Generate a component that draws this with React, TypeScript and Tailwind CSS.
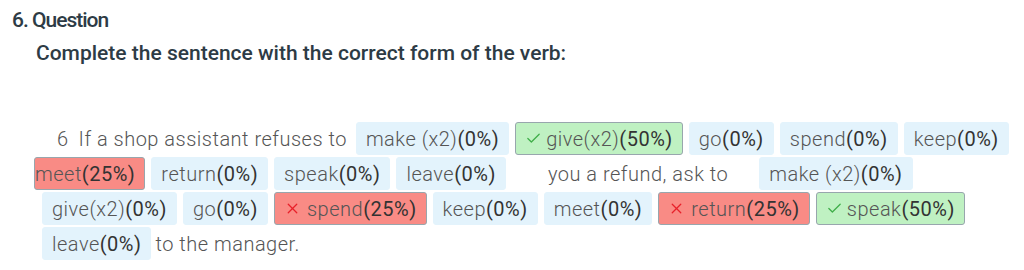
import { Check, X } from 'lucide-react'

type ChipKind = 'plain' | 'right' | 'wrong' | 'picked'

type ChipProps = {
    word: string
    pct: string
    kind?: ChipKind
}

// 'picked' is the red chip without a cross: the wrong answer that was dropped in.
const KIND_CLASS: Record<ChipKind, string> = {
    plain: 'bg-[#e3f3fc] border-[#e3f3fc] px-[9px]',
    right: 'bg-[#bff1c2] border-[#98a6ad] px-[9px]',
    wrong: 'bg-[#f98b85] border-[#98a6ad] px-[9px]',
    picked: 'bg-[#f98b85] border-[#98a6ad] pl-0 pr-[9px]',
}

function Chip({ word, pct, kind = 'plain' }: ChipProps) {
    return (
        <span
            className={`inline-flex h-[33px] items-center rounded-[3px] border whitespace-nowrap ${KIND_CLASS[kind]}`}
        >
            {kind === 'right' && <Check className="mr-[4px] h-[17px] w-[17px] text-[#3fae49]" strokeWidth={1.8} />}
            {kind === 'wrong' && <X className="mr-[6px] h-[17px] w-[17px] text-[#e8202a]" strokeWidth={1.8} />}
            <span className="font-light text-[#555]">{word}</span>
            <span className="font-normal text-[#333]">({pct})</span>
        </span>
    )
}

export default function App() {
    return (
        <div className="h-[270px] w-[1024px] bg-white font-['Roboto',sans-serif] text-[#555]">
            <h2 className="pl-[12px] pt-[7px] text-[21px] leading-[26px] font-medium tracking-[-1px] text-[#2d3b45]">
                6. Question
            </h2>
            <p className="pl-[36px] pt-[8px] text-[21px] leading-[25px] font-medium text-[#2d3b45]">
                Complete the sentence with the correct form of the verb:
            </p>

            <div className="mt-[56px] flex flex-col gap-[2px] text-[20px] leading-[22px] tracking-[0.5px]">
                <div className="flex items-center gap-[6px] pl-[57px]">
                    <span className="mr-[3px] font-light">
                        6<span className="ml-[10px]">If a shop assistant refuses to</span>
                    </span>
                    <Chip word="make (x2)" pct="0%" />
                    <Chip word="give(x2)" pct="50%" kind="right" />
                    <Chip word="go" pct="0%" />
                    <Chip word="spend" pct="0%" />
                    <Chip word="keep" pct="0%" />
                </div>
                <div className="flex items-center gap-[6px] pl-[34px]">
                    <Chip word="meet" pct="25%" kind="picked" />
                    <Chip word="return" pct="0%" />
                    <Chip word="speak" pct="0%" />
                    <Chip word="leave" pct="0%" />
                    <span className="ml-[36px] mr-[25px] font-light">you a refund, ask to</span>
                    <Chip word="make (x2)" pct="0%" />
                </div>
                <div className="flex items-center gap-[6px] pl-[42px]">
                    <Chip word="give(x2)" pct="0%" />
                    <Chip word="go" pct="0%" />
                    <Chip word="spend" pct="25%" kind="wrong" />
                    <Chip word="keep" pct="0%" />
                    <Chip word="meet" pct="0%" />
                    <Chip word="return" pct="25%" kind="wrong" />
                    <Chip word="speak" pct="50%" kind="right" />
                </div>
                <div className="flex items-center gap-[4px] pl-[42px]">
                    <Chip word="leave" pct="0%" />
                    <span className="font-light">to the manager.</span>
                </div>
            </div>
        </div>
    )
}
